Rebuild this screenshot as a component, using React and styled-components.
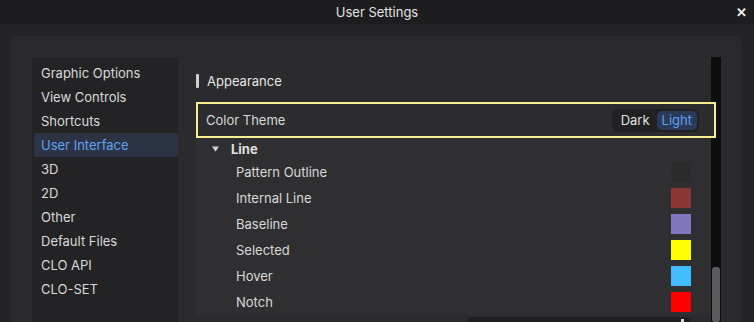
import React from "react";
import styled, { createGlobalStyle } from "styled-components";

const GlobalStyle = createGlobalStyle`
  html, body {
    margin: 0;
    padding: 0;
    background: #242426;
  }
  body {
    font-family: "Inter", "Noto Sans", sans-serif;
    -webkit-font-smoothing: antialiased;
  }
`;

const menu = [
  "Graphic Options",
  "View Controls",
  "Shortcuts",
  "User Interface",
  "3D",
  "2D",
  "Other",
  "Default Files",
  "CLO API",
  "CLO-SET",
];

const lineColors = [
  { name: "Pattern Outline", color: "#2b2b2c" },
  { name: "Internal Line", color: "#8c3535" },
  { name: "Baseline", color: "#8177bf" },
  { name: "Selected", color: "#ffff00" },
  { name: "Hover", color: "#40bcff" },
  { name: "Notch", color: "#ff0000" },
];

const App = () => {
  return (
    <Window>
      <GlobalStyle />
      <TitleBar>
        <span>User Settings</span>
        <Close>✕</Close>
      </TitleBar>

      <Body>
        <Panel>
          <Sidebar>
            {menu.map((item) => (
              <MenuItem key={item} $active={item === "User Interface"}>
                {item}
              </MenuItem>
            ))}
          </Sidebar>

          <Content>
            <SectionHeader>
              <Marker />
              Appearance
            </SectionHeader>

            <ThemeRow>
              <span>Color Theme</span>
              <Toggle>
                <ToggleOption>Dark</ToggleOption>
                <ToggleOption $active>Light</ToggleOption>
              </Toggle>
            </ThemeRow>

            <Group>
              <GroupHeader>
                <Caret viewBox="0 0 8 6">
                  <path d="M0 0 H8 L4 6 Z" fill="#cfcfcf" />
                </Caret>
                Line
              </GroupHeader>
              {lineColors.map((row) => (
                <ColorRow key={row.name}>
                  <span>{row.name}</span>
                  <Swatch $color={row.color} />
                </ColorRow>
              ))}
            </Group>

            <Popup>
              <PopupMark />
            </Popup>
          </Content>

          <Scrollbar>
            <Thumb />
          </Scrollbar>
        </Panel>
      </Body>
    </Window>
  );
};

export default App;

const Window = styled.div`
  width: 754px;
  height: 322px;
  display: flex;
  flex-direction: column;
  overflow: hidden;
  background: #242426;
`;

const TitleBar = styled.div`
  height: 24px;
  flex: none;
  background: #1d1d1f;
  display: flex;
  align-items: center;
  justify-content: center;
  position: relative;
  color: #e2e2e2;
  font-size: 13px;
`;

const Close = styled.span`
  position: absolute;
  right: 7px;
  top: 4px;
  font-size: 13px;
  font-weight: 700;
  color: #f0f0f0;
`;

const Body = styled.div`
  flex: 1;
  min-height: 0;
  padding: 12px 13px 0 10px;
  display: flex;
`;

const Panel = styled.div`
  flex: 1;
  background: #2a2a2c;
  border-radius: 8px 8px 0 0;
  padding: 21px 20px 0 22px;
  display: flex;
  min-height: 0;
`;

const Sidebar = styled.div`
  width: 146px;
  flex: none;
  margin-top: 1px;
  background: #232325;
  padding: 3px 0 0 2px;
  box-sizing: border-box;
  display: flex;
  flex-direction: column;
`;

const MenuItem = styled.div`
  height: 24px;
  display: flex;
  align-items: center;
  padding-left: 7px;
  font-size: 13px;
  border-radius: 3px;
  color: ${(p) => (p.$active ? "#5ea3f2" : "#d9d9d9")};
  background: ${(p) => (p.$active ? "#2c3344" : "transparent")};
`;

const Content = styled.div`
  flex: 1;
  min-width: 0;
  background: #2b2b2d;
  padding-left: 18px;
  padding-top: 1px;
  display: flex;
  flex-direction: column;
  position: relative;
`;

const SectionHeader = styled.div`
  height: 44px;
  display: flex;
  align-items: center;
  gap: 8px;
  font-size: 13px;
  color: #e6e6e6;
  padding-top: 2px;
  box-sizing: border-box;
`;

const Marker = styled.span`
  width: 3px;
  height: 14px;
  border-radius: 1px;
  background: #cfcfcf;
`;

const ThemeRow = styled.div`
  height: 36px;
  flex: none;
  box-sizing: border-box;
  border: 2px solid #f6ee8c;
  margin-right: -5px;
  position: relative;
  z-index: 2;
  background: #2c2c2e;
  display: flex;
  align-items: center;
  justify-content: space-between;
  padding: 0 15px 0 8px;
  font-size: 13px;
  color: #d8d8d8;
`;

const Toggle = styled.div`
  display: flex;
  background: #212123;
  border-radius: 6px;
  padding: 2px;
  height: 23px;
  box-sizing: border-box;
`;

const ToggleOption = styled.div`
  display: flex;
  align-items: center;
  padding: 0 ${(p) => (p.$active ? "5px" : "7px")};
  border-radius: 5px;
  font-size: 13px;
  color: ${(p) => (p.$active ? "#5aa2f4" : "#e0e0e0")};
  background: ${(p) => (p.$active ? "#2b3a56" : "transparent")};
`;

const Group = styled.div`
  background: #2f2f31;
  display: flex;
  flex-direction: column;
`;

const GroupHeader = styled.div`
  height: 21px;
  display: flex;
  align-items: center;
  padding-left: 16px;
  gap: 12px;
  font-size: 13px;
  font-weight: 700;
  color: #e0e0e0;
`;

const Caret = styled.svg`
  width: 7px;
  height: 6px;
`;

const ColorRow = styled.div`
  height: 26px;
  display: flex;
  align-items: center;
  justify-content: space-between;
  padding: 0 20px 0 40px;
  font-size: 13px;
  color: #d9d9d9;
`;

const Swatch = styled.span`
  width: 20px;
  height: 20px;
  background: ${(p) => p.$color};
`;

const Popup = styled.div`
  position: absolute;
  left: 289px;
  right: 20px;
  top: 260px;
  height: 40px;
  background: #1f1f21;
  border-radius: 6px;
  z-index: 3;
`;

const PopupMark = styled.span`
  position: absolute;
  right: 7px;
  top: 2px;
  width: 3px;
  height: 3px;
  background: #d8d8d8;
`;

const Scrollbar = styled.div`
  width: 10px;
  flex: none;
  background: #0d0d0d;
  display: flex;
  flex-direction: column;
  justify-content: flex-start;
  padding: 210px 1px 0;
  box-sizing: border-box;
`;

const Thumb = styled.div`
  height: 80px;
  background: #5b5b5d;
  border-radius: 3px;
`;
